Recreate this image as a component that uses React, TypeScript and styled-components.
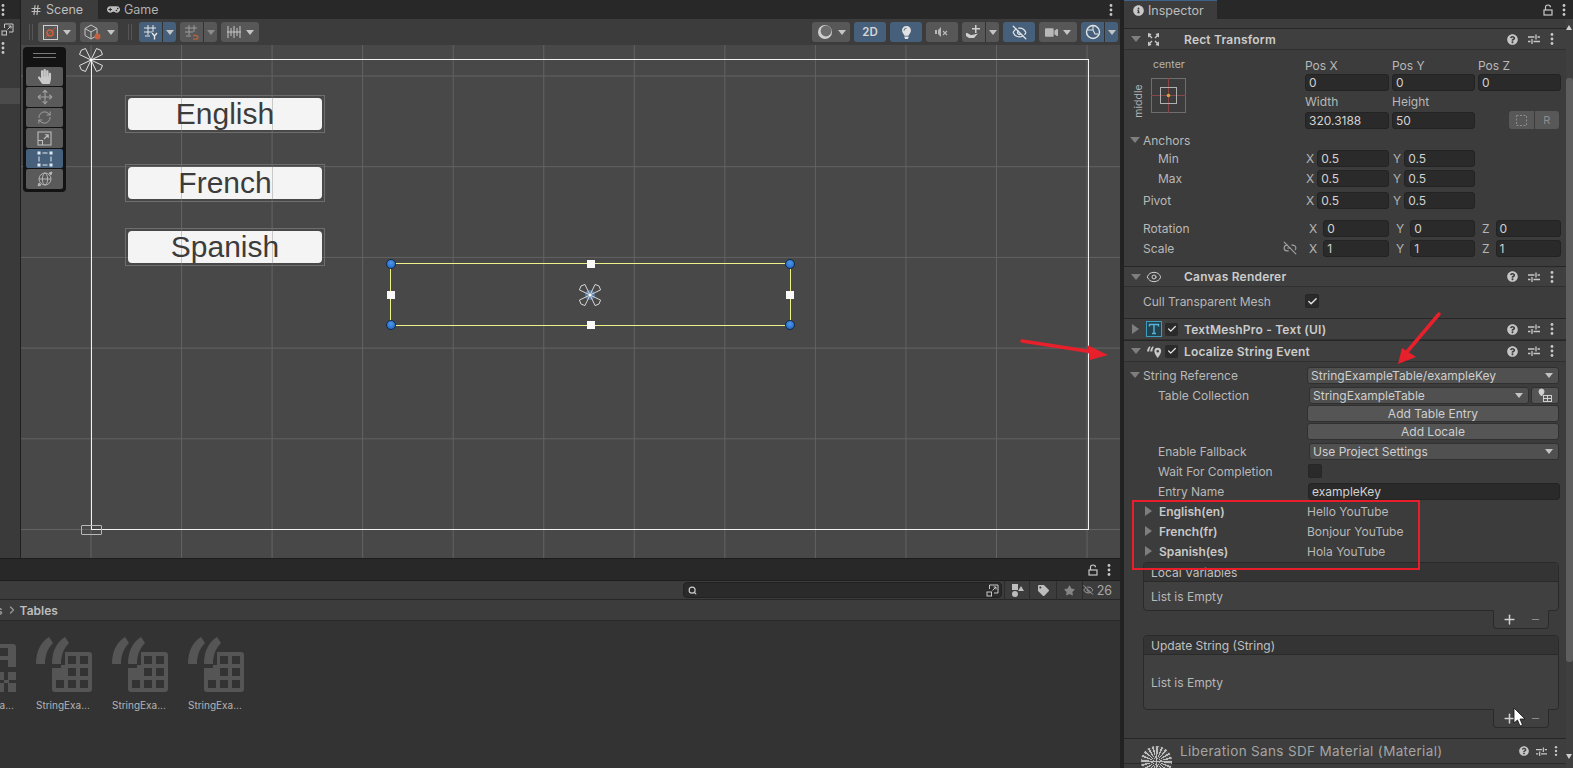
import React from 'react'
import styled, { createGlobalStyle } from 'styled-components'
import { FaHandPaper, FaGamepad, FaLightbulb, FaVideo, FaTag, FaStar, FaInfoCircle, FaQuestionCircle } from 'react-icons/fa'
import { Check, EyeOff, Eye, Hash, Search, Move, RefreshCw, ChevronRight, Plus, Minus, Link2Off } from 'lucide-react'

const GlobalStyle = createGlobalStyle`
  html, body {
    margin: 0;
    height: 100%;
    overflow: hidden;
    background: #282828;
  }
  * {
    box-sizing: border-box;
  }
`

const Page = styled.div`
  position: relative;
  width: 1573px;
  height: 768px;
  overflow: hidden;
  display: flex;
  font-family: Inter, 'Noto Sans', sans-serif;
  font-size: 12px;
  color: #c4c4c4;
  background: #1f1f1f;
`

const LeftColumn = styled.div`
  width: 1120px;
  display: flex;
  flex-direction: column;
`

const TopArea = styled.div`
  height: 558px;
  display: flex;
`

const HierarchyStrip = styled.div`
  width: 20px;
  background: #3a3a3a;
  display: flex;
  flex-direction: column;
`

const StripBar = styled.div<{ $h: number; $dark?: boolean }>`
  height: ${({ $h }) => $h}px;
  flex-shrink: 0;
  display: flex;
  align-items: center;
  padding-left: 1px;
  background: ${({ $dark }) => ($dark ? '#282828' : 'transparent')};
`

const StripSelected = styled.div`
  margin-top: 32px;
  height: 16px;
  background: #4b4b4b;
`

const ScenePanel = styled.div`
  margin-left: 1px;
  flex: 1;
  display: flex;
  flex-direction: column;
  min-width: 0;
`

const TabBar = styled.div`
  height: 19px;
  flex-shrink: 0;
  display: flex;
  align-items: stretch;
  background: #282828;
`

const Tab = styled.div<{ $active?: boolean; $focus?: boolean; $w: number }>`
  width: ${({ $w }) => $w}px;
  display: flex;
  align-items: center;
  gap: 4px;
  padding-left: 9px;
  font-size: 12.5px;
  color: ${({ $active }) => ($active ? '#bdbdbd' : '#b0b0b0')};
  background: ${({ $active }) => ($active ? '#3c3c3c' : 'transparent')};
  border-top: ${({ $focus }) => ($focus ? '1px solid #3f6288' : 'none')};
`

const SceneToolbar = styled.div`
  height: 26px;
  flex-shrink: 0;
  display: flex;
  align-items: center;
  justify-content: space-between;
  padding: 0 2px 0 8px;
  background: #3c3c3c;
`

const ToolGroup = styled.div`
  display: flex;
  align-items: center;
  gap: 4px;
`

const GripLine = styled.div<{ $ml: number; $mr: number }>`
  width: 4px;
  height: 16px;
  margin: 0 ${({ $mr }) => $mr}px 0 ${({ $ml }) => $ml}px;
  border-left: 1px solid #565656;
  border-right: 1px solid #565656;
`

const ToolButton = styled.div<{ $w: number; $blue?: boolean }>`
  width: ${({ $w }) => $w}px;
  height: 20px;
  display: flex;
  align-items: center;
  justify-content: center;
  gap: 5px;
  flex-shrink: 0;
  border-radius: 3px;
  font-size: 11.5px;
  font-weight: 600;
  color: #d6d6d6;
  background: ${({ $blue }) => ($blue ? '#46607c' : '#575757')};
`

const SplitPart = styled.div<{ $w: number; $blue?: boolean; $last?: boolean }>`
  width: ${({ $w }) => $w}px;
  height: 20px;
  display: flex;
  align-items: center;
  justify-content: center;
  background: ${({ $blue }) => ($blue ? '#46607c' : '#575757')};
  border-radius: ${({ $last }) => ($last ? '0 3px 3px 0' : '3px 0 0 3px')};
  border-left: ${({ $last }) => ($last ? '1px solid #333' : 'none')};
`

const SplitButton = styled.div`
  display: flex;
  flex-shrink: 0;
`

const Caret = styled.span<{ $size?: number; $color?: string; $right?: boolean }>`
  display: inline-block;
  flex-shrink: 0;
  ${({ $size = 4, $color = '#c4c4c4', $right }) =>
    $right
      ? `border-top: ${$size}px solid transparent; border-bottom: ${$size}px solid transparent; border-left: ${$size + 2}px solid ${$color};`
      : `border-left: ${$size}px solid transparent; border-right: ${$size}px solid transparent; border-top: ${$size + 1}px solid ${$color};`}
`

const SceneCanvas = styled.div`
  position: relative;
  flex: 1;
  overflow: hidden;
  background: #484848;
`

const GridSvg = styled.svg`
  position: absolute;
  inset: 0;
`

const CanvasFrame = styled.div`
  position: absolute;
  left: 70px;
  top: 14px;
  width: 998px;
  height: 471px;
  border: 1.5px solid #f2f2f2;
`

const SmallRect = styled.div`
  position: absolute;
  left: 60px;
  top: 480px;
  width: 21px;
  height: 10px;
  border: 1px solid #b8b8b8;
  border-radius: 1px;
`

const SceneButtonOutline = styled.div<{ $top: number; $h: number }>`
  position: absolute;
  left: 104px;
  top: ${({ $top }) => $top}px;
  width: 200px;
  height: ${({ $h }) => $h}px;
  padding: 2px;
  border: 1px solid #6e6e6e;
`

const SceneButton = styled.div`
  width: 100%;
  height: 100%;
  display: flex;
  align-items: center;
  justify-content: center;
  border-radius: 4px;
  font-family: 'Liberation Sans', Arial, sans-serif;
  font-size: 30px;
  color: #3c3c3c;
  background:
    linear-gradient(90deg, transparent 53px, #c8c8c8 53px, #c8c8c8 54px, transparent 54px, transparent 144px, #c8c8c8 144px, #c8c8c8 145px, transparent 145px),
    #f4f4f4;
`

const SelectionRect = styled.div`
  position: absolute;
  left: 369px;
  top: 218px;
  width: 401px;
  height: 63px;
  border: 1.5px solid #eef08a;
`

const CornerHandle = styled.span<{ $x: string; $y: string }>`
  position: absolute;
  left: ${({ $x }) => $x};
  top: ${({ $y }) => $y};
  width: 10px;
  height: 10px;
  margin: -5px 0 0 -5px;
  border-radius: 50%;
  border: 1px solid #10294a;
  background: radial-gradient(circle at 50% 35%, #4c97ec, #1d5fb8);
`

const EdgeHandle = styled.span<{ $x: string; $y: string }>`
  position: absolute;
  left: ${({ $x }) => $x};
  top: ${({ $y }) => $y};
  width: 8px;
  height: 8px;
  margin: -4px 0 0 -4px;
  background: #fafafa;
`

const PivotSlot = styled.span<{ $x: number; $y: number }>`
  position: absolute;
  left: ${({ $x }) => $x}px;
  top: ${({ $y }) => $y}px;
  line-height: 0;
`

const ToolPalette = styled.div`
  position: absolute;
  left: 2px;
  top: 2px;
  width: 43px;
  height: 145px;
  padding: 3px;
  display: flex;
  flex-direction: column;
  gap: 1px;
  border-radius: 4px;
  background: #131313;
`

const PaletteGrip = styled.div`
  height: 13px;
  margin: 3px 7px 0;
  border-top: 1px solid #7a7a7a;
  position: relative;
  &::after {
    content: '';
    position: absolute;
    left: 0;
    right: 0;
    top: 3px;
    border-top: 1px solid #7a7a7a;
  }
`

const PaletteButton = styled.div<{ $active?: boolean }>`
  height: 20px;
  display: flex;
  align-items: center;
  justify-content: center;
  border-radius: 2px;
  color: #bdbdbd;
  background: ${({ $active }) => ($active ? '#46607c' : '#5a5a5a')};
`

const BottomPanel = styled.div`
  flex: 1;
  display: flex;
  flex-direction: column;
  border-top: 1px solid #1c1c1c;
`

const ProjectHeader = styled.div`
  height: 21px;
  flex-shrink: 0;
  display: flex;
  align-items: center;
  justify-content: flex-end;
  gap: 9px;
  padding-right: 9px;
  background: #282828;
`

const ProjectToolbar = styled.div`
  height: 20px;
  flex-shrink: 0;
  display: flex;
  align-items: center;
  justify-content: flex-end;
  padding-right: 8px;
  background: #3c3c3c;
  border-top: 1px solid #1e1e1e;
  border-bottom: 1px solid #262626;
`

const SearchBox = styled.div`
  width: 319px;
  height: 16px;
  margin-right: 2px;
  display: flex;
  align-items: center;
  justify-content: space-between;
  padding: 0 2px 0 4px;
  border-radius: 4px;
  background: #2a2a2a;
  border: 1px solid #222;
`

const ProjectTool = styled.div<{ $w: number }>`
  width: ${({ $w }) => $w}px;
  height: 19px;
  display: flex;
  align-items: center;
  justify-content: center;
  gap: 3px;
  border-left: 1px solid #2c2c2c;
  color: #a8a8a8;
  font-size: 12.5px;
`

const Breadcrumb = styled.div`
  height: 21px;
  flex-shrink: 0;
  display: flex;
  align-items: center;
  gap: 2px;
  background: #3c3c3c;
  border-bottom: 1px solid #2a2a2a;
  font-weight: 600;
  color: #bcbcbc;
`

const BreadcrumbParent = styled.span`
  margin: 0 1px 0 -4px;
  color: #9a9a9a;
`

const AssetGrid = styled.div`
  flex: 1;
  display: flex;
  gap: 20px;
  padding-top: 15px;
  overflow: hidden;
  background: #333333;
`

const AssetItem = styled.div<{ $first?: boolean }>`
  width: 56px;
  flex-shrink: 0;
  margin-left: ${({ $first }) => ($first ? -40 : 0)}px;
  display: flex;
  flex-direction: column;
  line-height: 0;
`

const AssetName = styled.div`
  margin-top: 6px;
  font-size: 10px;
  line-height: 14px;
  color: #b4b4b4;
  white-space: nowrap;
`

const InspectorPanel = styled.div`
  position: relative;
  flex: 1;
  display: flex;
  flex-direction: column;
  padding-left: 4px;
  background: #222222;
`

const InspectorBody = styled.div`
  flex: 1;
  padding: 9px 7px 0 0;
  background: #3c3c3c;
  display: flex;
  flex-direction: column;
`

const TabTools = styled.div`
  margin-left: auto;
  display: flex;
  align-items: center;
  gap: 9px;
  padding-right: 7px;
`

const ComponentHeader = styled.div<{ $h?: number; $mt?: number }>`
  height: ${({ $h }) => $h ?? 22}px;
  margin-top: ${({ $mt }) => $mt ?? 0}px;
  flex-shrink: 0;
  display: flex;
  align-items: center;
  padding: 0 12px 0 6px;
  background: #3f3f3f;
  border-top: 1px solid #262626;
  border-bottom: 1px solid #303030;
`

const FoldSlot = styled.span`
  width: 11px;
  display: inline-flex;
  justify-content: center;
  flex-shrink: 0;
`

const HeaderIcon = styled.span`
  width: 17px;
  margin-left: 4px;
  display: inline-flex;
  justify-content: center;
  color: #c8c8c8;
  line-height: 0;
`

const HeaderCheck = styled.span`
  width: 13px;
  height: 13px;
  margin-left: 3px;
  display: inline-flex;
  align-items: center;
  justify-content: center;
  border-radius: 2px;
  background: #2a2a2a;
  color: #e8e8e8;
`

const HeaderTitle = styled.span<{ $ml: number }>`
  margin-left: ${({ $ml }) => $ml}px;
  font-weight: 600;
  letter-spacing: 0.2px;
  color: #cccccc;
`

const HeaderTools = styled.span<{ $gap?: number }>`
  margin-left: auto;
  display: flex;
  align-items: center;
  gap: ${({ $gap }) => $gap ?? 10}px;
  color: #c4c4c4;
`

const Row = styled.div<{ $h?: number; $mt?: number; $indent?: number; $pr?: number }>`
  height: ${({ $h }) => $h ?? 20}px;
  margin-top: ${({ $mt }) => $mt ?? 0}px;
  padding: 0 ${({ $pr }) => $pr ?? 0}px 0 ${({ $indent }) => $indent ?? 0}px;
  flex-shrink: 0;
  display: flex;
  align-items: center;
`

const Label = styled.span<{ $w: number; $bold?: boolean; $pl?: number }>`
  width: ${({ $w }) => $w}px;
  padding-left: ${({ $pl }) => $pl ?? 0}px;
  flex-shrink: 0;
  white-space: nowrap;
  font-weight: ${({ $bold }) => ($bold ? 600 : 400)};
  color: ${({ $bold }) => ($bold ? '#c8c8c8' : '#b8b8b8')};
`

const RectTop = styled.div`
  height: 72px;
  margin-top: 7px;
  flex-shrink: 0;
  display: flex;
`

const AnchorArea = styled.div`
  width: 181px;
  flex-shrink: 0;
  position: relative;
`

const AnchorCaption = styled.span`
  position: absolute;
  left: 29px;
  top: 1px;
  font-size: 10.5px;
  line-height: 14px;
  color: #b4b4b4;
`

const AnchorSide = styled.span`
  position: absolute;
  left: -2px;
  top: 37px;
  font-size: 10.5px;
  line-height: 14px;
  color: #b4b4b4;
  transform: rotate(-90deg);
`

const AnchorBox = styled.span`
  position: absolute;
  left: 27px;
  top: 21px;
  line-height: 0;
`

const PositionGrid = styled.div`
  display: grid;
  grid-template-columns: 84px 83px 83px;
  grid-template-rows: 16px 19px 19px 18px;
  column-gap: 3px;
  align-items: center;
`

const TripleFields = styled.div`
  display: grid;
  grid-template-columns: 84px 83px 83px;
  column-gap: 3px;
`

const Axis = styled.div<{ $wide?: boolean }>`
  display: flex;
  align-items: center;
  padding-left: ${({ $wide }) => ($wide ? 4 : 1)}px;
  gap: ${({ $wide }) => ($wide ? 6 : 3)}px;
  color: #b4b4b4;
`

const FieldInput = styled.div<{ $h?: number }>`
  flex: 1;
  height: ${({ $h }) => $h ?? 17}px;
  display: flex;
  align-items: center;
  padding-left: 3px;
  border-radius: 3px;
  background: #2a2a2a;
  border: 1px solid #232323;
  color: #d2d2d2;
  min-width: 0;
`

const RawConstraint = styled.div`
  height: 18px;
  width: 50px;
  margin-left: 31px;
  display: flex;
  border-radius: 3px;
  overflow: hidden;
`

const RawPart = styled.div`
  flex: 1;
  display: flex;
  align-items: center;
  justify-content: center;
  background: #585858;
  color: #8c8c8c;
  font-size: 11px;
  & + & {
    border-left: 1px solid #3a3a3a;
  }
`

const LinkSlot = styled.span`
  width: 22px;
  flex-shrink: 0;
  color: #9a9a9a;
  line-height: 0;
`

const CheckBox = styled.span`
  width: 14px;
  height: 14px;
  display: inline-flex;
  align-items: center;
  justify-content: center;
  border-radius: 2px;
  background: #2a2a2a;
  border: 1px solid #262626;
  color: #e6e6e6;
`

const Dropdown = styled.div<{ $w: number }>`
  width: ${({ $w }) => $w}px;
  height: 17px;
  flex-shrink: 0;
  display: flex;
  align-items: center;
  justify-content: space-between;
  padding: 0 5px 0 3px;
  border-radius: 3px;
  background: #505050;
  border: 1px solid #303030;
  color: #cfcfcf;
`

const GrayButton = styled.div<{ $w: number; $ml?: number }>`
  width: ${({ $w }) => $w}px;
  height: 17px;
  margin-left: ${({ $ml }) => $ml ?? 0}px;
  display: flex;
  align-items: center;
  justify-content: center;
  flex-shrink: 0;
  border-radius: 3px;
  background: #555555;
  border: 1px solid #303030;
  color: #cfcfcf;
`

const ListBox = styled.div<{ $h: number; $mt: number }>`
  height: ${({ $h }) => $h}px;
  margin: ${({ $mt }) => $mt}px 7px 0 19px;
  flex-shrink: 0;
  display: flex;
  flex-direction: column;
  border: 1px solid #2a2a2a;
  border-radius: 4px;
  background: #404040;
`

const ListTitle = styled.div`
  height: 19px;
  flex-shrink: 0;
  display: flex;
  align-items: center;
  padding-left: 7px;
  background: #343434;
  border-bottom: 1px solid #2a2a2a;
  border-radius: 4px 4px 0 0;
  color: #c0c0c0;
`

const ListBody = styled.div`
  flex: 1;
  display: flex;
  align-items: center;
  padding-left: 7px;
  color: #b8b8b8;
`

const ListFooter = styled.div`
  width: 56px;
  height: 19px;
  margin: -1px 17px 0 auto;
  flex-shrink: 0;
  display: flex;
  align-items: center;
  justify-content: space-around;
  padding: 0 1px;
  background: #404040;
  border: 1px solid #2a2a2a;
  border-top: 1px solid #404040;
  border-radius: 0 0 4px 4px;
  color: #d0d0d0;
  line-height: 0;
`

const MaterialHeader = styled.div`
  height: 26px;
  margin-top: 10px;
  flex-shrink: 0;
  display: flex;
  align-items: center;
  padding: 0 8px 0 17px;
  background: #3e3e3e;
  border-top: 1px solid #262626;
  border-bottom: 1px solid #2a2a2a;
`

const MaterialName = styled.span`
  margin-left: 8px;
  font-size: 13.5px;
  letter-spacing: 0.35px;
  color: #a4a4a4;
`

const MaterialBall = styled.span`
  width: 31px;
  height: 31px;
  margin-top: 20px;
  flex-shrink: 0;
  border-radius: 50%;
  background: repeating-conic-gradient(#bcbcbc 0 8deg, #4d4d4d 8deg 18deg);
`

const ScrollBar = styled.div`
  position: absolute;
  right: 0;
  top: 19px;
  bottom: 0;
  width: 7px;
  background: #3f3f3f;
`

const ScrollThumb = styled.div`
  position: absolute;
  left: 0;
  right: 0;
  top: 59px;
  height: 584px;
  border-radius: 3px;
  background: #5e5e5e;
`

const ScrollArrow = styled.span<{ $top: number; $up?: boolean }>`
  position: absolute;
  left: 0;
  top: ${({ $top }) => $top}px;
  border-left: 3.5px solid transparent;
  border-right: 3.5px solid transparent;
  ${({ $up }) => ($up ? 'border-bottom: 5px solid #cfcfcf;' : 'border-top: 5px solid #cfcfcf;')}
`

const OverlaySvg = styled.svg`
  position: absolute;
  left: 0;
  top: 0;
  pointer-events: none;
`

const Dots = ({ size = 14, color = '#c8c8c8' }: { size?: number; color?: string }) => (
  <svg width="4" height={size} viewBox="0 0 4 14">
    <circle cx="2" cy="2.5" r="1.4" fill={color} />
    <circle cx="2" cy="7" r="1.4" fill={color} />
    <circle cx="2" cy="11.5" r="1.4" fill={color} />
  </svg>
)

const LockIcon = () => (
  <svg width="10" height="12" viewBox="0 0 10 12" fill="none" stroke="#c8c8c8" strokeWidth="1.2">
    <rect x="1" y="6" width="8" height="5" />
    <path d="M2.5 6V3.2C2.5 1.8 3.6 1 5 1s2.5.8 2.5 2.2" />
  </svg>
)

const SlidersIcon = ({ size = 12 }: { size?: number }) => (
  <svg width={size} height={size} viewBox="0 0 12 12" stroke="#c8c8c8" strokeWidth="1.3">
    <path d="M0 4h6.500M9.500 4H12M0 8.500h2.500M5.500 8.500H12M8 1.500v5M4 6v5" />
  </svg>
)

const HeaderButtons = ({ small }: { small?: boolean }) => (
  <HeaderTools $gap={small ? 7 : 10}>
    <FaQuestionCircle size={small ? 10 : 11} color="#c6c6c6" />
    <SlidersIcon size={small ? 11 : 12} />
    <Dots size={small ? 12 : 14} />
  </HeaderTools>
)

const RestoreIcon = ({ color = '#c8c8c8' }: { color?: string }) => (
  <svg width="13" height="13" viewBox="0 0 13 13" fill="none" stroke={color} strokeWidth="1">
    <path d="M3.500 5V1h8.500v8H8" />
    <rect x="1" y="8" width="4.500" height="4" />
    <path d="M6.500 6.500 10 3M7.500 3H10v2.500" />
  </svg>
)

const Gizmo = ({ size = 26, center }: { size?: number; center?: boolean }) => (
  <svg width={size} height={size} viewBox="-13 -13 26 26" fill="none" stroke="#e8e8e8" strokeWidth="0.9">
    {center && <circle r="5.500" fill="#55769c" stroke="none" />}
    {[45, 135, 225, 315].map(a => (
      <path key={a} d="M0 0 L-4.200 -12 L0 -13.800 L4.200 -12 Z" transform={`rotate(${a})`} />
    ))}
    <circle r="1.200" fill="#fff" stroke="none" />
  </svg>
)

const ScaleIcon = () => (
  <svg width="15" height="15" viewBox="0 0 15 15" fill="none" stroke="#bdbdbd" strokeWidth="1.1">
    <path d="M1 9V1h13v13H6" />
    <rect x="1" y="9.500" width="4.500" height="4.500" />
    <path d="M7 8 11 4M8 3.800h3.200V7" />
  </svg>
)

const RectToolIcon = () => (
  <svg width="16" height="16" viewBox="0 0 16 16" fill="#dfe9f3" stroke="#dfe9f3">
    <path d="M2 2h12v12H2z" fill="none" strokeDasharray="5 7" strokeDashoffset="-3.500" strokeWidth="1" />
    <rect x=".5" y=".5" width="3" height="3" stroke="none" />
    <rect x="12.500" y=".5" width="3" height="3" stroke="none" />
    <rect x=".5" y="12.500" width="3" height="3" stroke="none" />
    <rect x="12.500" y="12.500" width="3" height="3" stroke="none" />
  </svg>
)

const TransformIcon = () => (
  <svg width="16" height="16" viewBox="0 0 16 16" fill="none" stroke="#b4b4b4" strokeWidth="1">
    <circle cx="8" cy="8" r="6" />
    <ellipse cx="8" cy="8" rx="2.600" ry="6" />
    <path d="M2 8h12" />
    <path d="M1 15l3-1-2-2zM15 1l-3 1 2 2z" fill="#b4b4b4" />
  </svg>
)

const SnapIcon = ({ color = '#e6e6e6', magnet }: { color?: string; magnet?: boolean }) => (
  <svg width="16" height="16" viewBox="0 0 16 16" fill="none" stroke={color} strokeWidth="1">
    <path d="M5 1v10M10 1v7M1 4h12M1 8h8M2 12h5" />
    {magnet ? (
      <path d="M9 11.500h3a1.800 1.800 0 0 1 0 3.600H9" stroke="#b8603f" strokeWidth="1.400" />
    ) : (
      <path d="M9 9l2.500 3L14 9M11.500 12v3.500" strokeWidth="1.400" />
    )}
  </svg>
)

const ShadingIcon = () => (
  <svg width="16" height="16" viewBox="0 0 16 16">
    <circle cx="8" cy="8" r="7" fill="#cfcfcf" />
    <circle cx="9" cy="7" r="5.400" fill="#6c6c6c" />
  </svg>
)

const CubeIcon = () => (
  <svg width="18" height="17" viewBox="0 0 18 17" fill="none" stroke="#c6c6c6" strokeWidth="1">
    <path d="M1 4.500 7 1l6 3.500v7L7 15l-6-3.500zM1 4.500 7 8l6-3.500M7 8v7" />
    <circle cx="13.500" cy="12.500" r="3" fill="#c7603f" stroke="none" />
  </svg>
)

const RectSnapIcon = () => (
  <svg width="15" height="15" viewBox="0 0 15 15" fill="none">
    <rect x=".5" y=".5" width="14" height="14" stroke="#cfcfcf" />
    <path d="M2 13 13 2" stroke="#b8603f" />
    <circle cx="7" cy="8" r="3" stroke="#c7603f" strokeWidth="1.600" />
  </svg>
)

const LadderIcon = () => (
  <svg width="14" height="14" viewBox="0 0 14 14" stroke="#c8c8c8" strokeWidth="1">
    <path d="M1 1v12M4 3v8M7 1v12M10 3v8M13 1v12M0 7h14" />
  </svg>
)

const GlobeIcon = () => (
  <svg width="18" height="18" viewBox="0 0 18 18" fill="none" stroke="#e4e4e4" strokeWidth="1.400">
    <circle cx="9" cy="9" r="6.500" />
    <path d="M3 7h6l2 4h3M9 3v4" strokeWidth="1.100" />
  </svg>
)

const FxIcon = () => (
  <svg width="15" height="14" viewBox="0 0 15 14" fill="#cfcfcf">
    <path d="M0 8c3 0 3 2 6 2l6-1.500-4 4.500H3L0 11zM9 0h1.500v3H14v1.500h-3.500V8H9V4.500H6V3h3z" />
  </svg>
)

const AudioIcon = () => (
  <svg width="14" height="12" viewBox="0 0 14 12" fill="#b8b8b8">
    <path d="M0 4h2v4H0zM3 4l3-3v10L3 8z" />
    <path d="M8 5l4 4M12 5 8 9" stroke="#b8b8b8" strokeWidth="1.200" />
  </svg>
)

const RectTransformIcon = () => (
  <svg width="13" height="13" viewBox="0 0 13 13" fill="#c8c8c8">
    <path d="M1 0l3.500 1L3.400 2.500 5.500 4.500 4.500 5.500 2.500 3.400 1 4.500zM12 0 8.500 1l1.100 1.500L7.500 4.500l1 1 2-2.100L12 4.500zM1 13l3.500-1-1.100-1.500 2.100-2-1-1-2 2.100L1 8.500zM12 13l-3.500-1 1.100-1.500-2.100-2 1-1 2 2.100L12 8.500z" />
  </svg>
)

const LocalizeIcon = () => (
  <svg width="16" height="15" viewBox="0 0 15 14" fill="#c8c8c8">
    <path d="M1 7c0-2 1-4 2.500-5l.8.8C3.500 4 3 5.500 3 7zM4 7c0-2 1-4 2.500-5l.8.8C6.500 4 6 5.500 6 7z" />
    <path d="M11 3.500a3.200 3.200 0 0 1 3.200 3.200C14.200 9 11 13 11 13S7.800 9 7.800 6.700A3.200 3.200 0 0 1 11 3.500zm0 2a1.200 1.200 0 1 0 0 2.400 1.200 1.200 0 0 0 0-2.400z" />
  </svg>
)

const TmpIcon = () => (
  <svg width="16" height="16" viewBox="0 0 16 16" fill="none">
    <rect x=".5" y=".5" width="15" height="15" fill="#23424f" stroke="#3f9dc0" />
    <path d="M3.500 5.500V3.500h9v2M8 3.500v9M6 12.500h4" stroke="#56b4d6" strokeWidth="1.400" />
  </svg>
)

const TableLinkIcon = () => (
  <svg width="14" height="14" viewBox="0 0 14 14" fill="none" stroke="#cfcfcf" strokeWidth="1">
    <path d="M3.500 1a2.500 2.500 0 0 1 2.500 2.500C6 5.500 3.500 8 3.500 8S1 5.500 1 3.500A2.500 2.500 0 0 1 3.500 1z" fill="#cfcfcf" />
    <rect x="5.500" y="7.500" width="8" height="6" />
    <path d="M5.500 10.500h8M9.500 7.500v6" />
  </svg>
)

const AnchorPreset = () => (
  <svg width="35" height="35" viewBox="0 0 35 35" fill="none">
    <rect x=".5" y=".5" width="34" height="34" stroke="#6e6e6e" />
    <path d="M17.500 0v35M0 17.500h35" stroke="#8a4646" />
    <rect x="9.500" y="9.500" width="16" height="16" stroke="#b0b0b0" />
    <circle cx="17.500" cy="17.500" r="1.800" fill="#d7a13c" />
  </svg>
)

const TableAsset = () => (
  <svg width="56" height="56" viewBox="0 0 56 56" fill="#555555">
    <path d="M0 28C0 15 5 6 13 1l4 6C12 12 9 19 9 28zM16 28C16 15 21 6 29 1l4 6C28 12 25 19 25 28z" />
    <path
      fillRule="evenodd"
      d="M29 16H53a3 3 0 0 1 3 3V53a3 3 0 0 1-3 3H19a3 3 0 0 1-3-3V32H25V29H29zM32 20v8h8v-8zM44 20v8h8v-8zM32 32v8h8v-8zM44 32v8h8v-8zM20 44v8h8v-8zM32 44v8h8v-8zM44 44v8h8v-8z"
    />
  </svg>
)

const FontAsset = () => (
  <svg width="56" height="56" viewBox="0 0 56 56" fill="#555555">
    <path fillRule="evenodd" d="M36 8h17a3 3 0 0 1 3 3v20h-8v-7h-12v-4h12v-8h-12z" />
    <path d="M48 36h8v8h-8zM36 36h8v8h-8zM44 44h5v3h-5zM48 47h8v9h-8zM36 47h8v9h-8z" />
  </svg>
)

const gridXs = Array.from({ length: 12 }, (_, i) => 70 + i * 90.55)
const gridYs = Array.from({ length: 6 }, (_, i) => 31 + i * 90.7)

const vectorRows = [
  { label: 'Min', indent: 34, mt: 0 },
  { label: 'Max', indent: 34, mt: 2 },
  { label: 'Pivot', indent: 19, mt: 4 },
]

const localeRows = [
  { name: 'English(en)', text: 'Hello YouTube' },
  { name: 'French(fr)', text: 'Bonjour YouTube' },
  { name: 'Spanish(es)', text: 'Hola YouTube' },
]

const tools = [
  <FaHandPaper size={15} color="#c9c9c9" />,
  <Move size={16} color="#a2a2a2" strokeWidth={1.6} />,
  <RefreshCw size={15} color="#b0b0b0" strokeWidth={1.3} />,
  <ScaleIcon />,
  <RectToolIcon />,
  <TransformIcon />,
]

const App: React.FC = () => {
  return (
    <Page>
      <GlobalStyle />
      <LeftColumn>
        <TopArea>
          <HierarchyStrip>
            <StripBar $h={19} $dark>
              <Dots />
            </StripBar>
            <StripBar $h={21}>
              <RestoreIcon />
            </StripBar>
            <StripBar $h={16}>
              <Dots />
            </StripBar>
            <StripSelected />
          </HierarchyStrip>
          <ScenePanel>
            <TabBar>
              <Tab $active $w={77}>
                <Hash size={12} color="#bdbdbd" strokeWidth={2.4} />
                Scene
              </Tab>
              <Tab $w={70}>
                <FaGamepad size={13} color="#bdbdbd" />
                Game
              </Tab>
              <TabTools>
                <Dots />
              </TabTools>
            </TabBar>
            <SceneToolbar>
              <ToolGroup>
                <GripLine $ml={0} $mr={1} />
                <ToolButton $w={38}>
                  <RectSnapIcon />
                  <Caret />
                </ToolButton>
                <ToolButton $w={38}>
                  <CubeIcon />
                  <Caret />
                </ToolButton>
                <GripLine $ml={6} $mr={3} />
                <SplitButton>
                  <SplitPart $w={23} $blue>
                    <SnapIcon />
                  </SplitPart>
                  <SplitPart $w={14} $blue $last>
                    <Caret />
                  </SplitPart>
                </SplitButton>
                <SplitButton>
                  <SplitPart $w={23}>
                    <SnapIcon color="#9c9c9c" magnet />
                  </SplitPart>
                  <SplitPart $w={14} $last>
                    <Caret $color="#8c8c8c" />
                  </SplitPart>
                </SplitButton>
                <ToolButton $w={38}>
                  <LadderIcon />
                  <Caret />
                </ToolButton>
              </ToolGroup>
              <ToolGroup>
                <ToolButton $w={38}>
                  <ShadingIcon />
                  <Caret />
                </ToolButton>
                <ToolButton $w={32} $blue>
                  2D
                </ToolButton>
                <ToolButton $w={32} $blue>
                  <FaLightbulb size={13} color="#e2e2e2" />
                </ToolButton>
                <ToolButton $w={32}>
                  <AudioIcon />
                </ToolButton>
                <SplitButton>
                  <SplitPart $w={23}>
                    <FxIcon />
                  </SplitPart>
                  <SplitPart $w={14} $last>
                    <Caret />
                  </SplitPart>
                </SplitButton>
                <ToolButton $w={32} $blue>
                  <EyeOff size={15} color="#e2e2e2" />
                </ToolButton>
                <ToolButton $w={38}>
                  <FaVideo size={13} color="#b8b8b8" />
                  <Caret />
                </ToolButton>
                <SplitButton>
                  <SplitPart $w={23} $blue>
                    <GlobeIcon />
                  </SplitPart>
                  <SplitPart $w={14} $blue $last>
                    <Caret />
                  </SplitPart>
                </SplitButton>
              </ToolGroup>
            </SceneToolbar>
            <SceneCanvas>
              <GridSvg width="1099" height="513">
                {gridXs.map(x => (
                  <line key={x} x1={x} x2={x} y1={0} y2={513} stroke="#636363" />
                ))}
                {gridYs.map(y => (
                  <line key={y} x1={0} x2={1099} y1={y} y2={y} stroke="#636363" />
                ))}
              </GridSvg>
              <CanvasFrame />
              <SmallRect />
              <PivotSlot $x={57} $y={2}>
                <Gizmo />
              </PivotSlot>
              <SceneButtonOutline $top={50} $h={38}>
                <SceneButton>English</SceneButton>
              </SceneButtonOutline>
              <SceneButtonOutline $top={119} $h={38}>
                <SceneButton>French</SceneButton>
              </SceneButtonOutline>
              <SceneButtonOutline $top={183} $h={38}>
                <SceneButton>Spanish</SceneButton>
              </SceneButtonOutline>
              <SelectionRect>
                <CornerHandle $x="0%" $y="0%" />
                <CornerHandle $x="100%" $y="0%" />
                <CornerHandle $x="0%" $y="100%" />
                <CornerHandle $x="100%" $y="100%" />
                <EdgeHandle $x="50%" $y="0%" />
                <EdgeHandle $x="50%" $y="100%" />
                <EdgeHandle $x="0%" $y="50%" />
                <EdgeHandle $x="100%" $y="50%" />
                <PivotSlot $x={187} $y={19}>
                  <Gizmo size={24} center />
                </PivotSlot>
              </SelectionRect>
              <ToolPalette>
                <PaletteGrip />
                {tools.map((icon, i) => (
                  <PaletteButton key={i} $active={i === 4}>
                    {icon}
                  </PaletteButton>
                ))}
              </ToolPalette>
            </SceneCanvas>
          </ScenePanel>
        </TopArea>
        <BottomPanel>
          <ProjectHeader>
            <LockIcon />
            <Dots />
          </ProjectHeader>
          <ProjectToolbar>
            <SearchBox>
              <Search size={9} color="#cfcfcf" strokeWidth={3} />
              <RestoreIcon />
            </SearchBox>
            <ProjectTool $w={25}>
              <svg width="13" height="13" viewBox="0 0 13 13" fill="#bdbdbd">
                <rect x="1" y="0" width="6" height="6" />
                <circle cx="4" cy="10" r="3" />
                <path d="M7 7l3-5 3 5z" />
              </svg>
            </ProjectTool>
            <ProjectTool $w={27}>
              <FaTag size={11} color="#bdbdbd" />
            </ProjectTool>
            <ProjectTool $w={26}>
              <FaStar size={11} color="#858585" />
            </ProjectTool>
            <ProjectTool $w={30}>
              <EyeOff size={14} color="#a8a8a8" />
              26
            </ProjectTool>
          </ProjectToolbar>
          <Breadcrumb>
            <BreadcrumbParent>s</BreadcrumbParent>
            <ChevronRight size={12} color="#9c9c9c" strokeWidth={2.4} />
            Tables
          </Breadcrumb>
          <AssetGrid>
            <AssetItem $first>
              <FontAsset />
              <AssetName>StringExa...</AssetName>
            </AssetItem>
            <AssetItem>
              <TableAsset />
              <AssetName>StringExa...</AssetName>
            </AssetItem>
            <AssetItem>
              <TableAsset />
              <AssetName>StringExa...</AssetName>
            </AssetItem>
            <AssetItem>
              <TableAsset />
              <AssetName>StringExa...</AssetName>
            </AssetItem>
          </AssetGrid>
        </BottomPanel>
      </LeftColumn>

      <InspectorPanel>
        <TabBar>
          <Tab $active $focus $w={93}>
            <FaInfoCircle size={11} color="#c8c8c8" />
            Inspector
          </Tab>
          <TabTools>
            <LockIcon />
            <Dots />
          </TabTools>
        </TabBar>
        <InspectorBody>
          <ComponentHeader>
            <FoldSlot>
              <Caret $size={5} $color="#7e7e7e" />
            </FoldSlot>
            <HeaderIcon>
              <RectTransformIcon />
            </HeaderIcon>
            <HeaderTitle $ml={22}>Rect Transform</HeaderTitle>
            <HeaderButtons />
          </ComponentHeader>
          <RectTop>
            <AnchorArea>
              <AnchorCaption>center</AnchorCaption>
              <AnchorSide>middle</AnchorSide>
              <AnchorBox>
                <AnchorPreset />
              </AnchorBox>
            </AnchorArea>
            <PositionGrid>
              <Label $w={84}>Pos X</Label>
              <Label $w={83}>Pos Y</Label>
              <Label $w={83}>Pos Z</Label>
              <FieldInput>0</FieldInput>
              <FieldInput>0</FieldInput>
              <FieldInput>0</FieldInput>
              <Label $w={84}>Width</Label>
              <Label $w={83}>Height</Label>
              <span />
              <FieldInput>320.3188</FieldInput>
              <FieldInput>50</FieldInput>
              <RawConstraint>
                <RawPart>
                  <svg width="11" height="11" viewBox="0 0 11 11" fill="none" stroke="#8c8c8c" strokeDasharray="2 1.500">
                    <rect x=".5" y=".5" width="10" height="10" />
                  </svg>
                </RawPart>
                <RawPart>R</RawPart>
              </RawConstraint>
            </PositionGrid>
          </RectTop>
          <Row $h={18} $mt={2} $indent={5}>
            <FoldSlot>
              <Caret $size={5} $color="#7e7e7e" />
            </FoldSlot>
            <Label $w={160} $pl={3}>
              Anchors
            </Label>
          </Row>
          {vectorRows.map(({ label, indent, mt }) => (
            <Row key={label} $h={18} $mt={mt} $indent={indent}>
              <Label $w={181 - indent}>{label}</Label>
              <TripleFields>
                <Axis>
                  X<FieldInput>0.5</FieldInput>
                </Axis>
                <Axis>
                  Y<FieldInput>0.5</FieldInput>
                </Axis>
              </TripleFields>
            </Row>
          ))}
          <Row $h={18} $mt={10} $indent={19}>
            <Label $w={162}>Rotation</Label>
            <TripleFields>
              <Axis $wide>
                X<FieldInput>0</FieldInput>
              </Axis>
              <Axis $wide>
                Y<FieldInput>0</FieldInput>
              </Axis>
              <Axis $wide>
                Z<FieldInput>0</FieldInput>
              </Axis>
            </TripleFields>
          </Row>
          <Row $h={18} $mt={2} $indent={19}>
            <Label $w={140}>Scale</Label>
            <LinkSlot>
              <Link2Off size={14} color="#a0a0a0" />
            </LinkSlot>
            <TripleFields>
              <Axis $wide>
                X<FieldInput>1</FieldInput>
              </Axis>
              <Axis $wide>
                Y<FieldInput>1</FieldInput>
              </Axis>
              <Axis $wide>
                Z<FieldInput>1</FieldInput>
              </Axis>
            </TripleFields>
          </Row>

          <ComponentHeader $mt={9} $h={21}>
            <FoldSlot>
              <Caret $size={5} $color="#7e7e7e" />
            </FoldSlot>
            <HeaderIcon>
              <Eye size={16} color="#cfcfcf" strokeWidth={1.5} />
            </HeaderIcon>
            <HeaderTitle $ml={22}>Canvas Renderer</HeaderTitle>
            <HeaderButtons />
          </ComponentHeader>
          <Row $h={20} $mt={4} $indent={19}>
            <Label $w={162}>Cull Transparent Mesh</Label>
            <CheckBox>
              <Check size={11} strokeWidth={3} />
            </CheckBox>
          </Row>

          <ComponentHeader $mt={7} $h={22}>
            <FoldSlot>
              <Caret $right $size={5} $color="#7e7e7e" />
            </FoldSlot>
            <HeaderIcon>
              <TmpIcon />
            </HeaderIcon>
            <HeaderCheck>
              <Check size={10} strokeWidth={3} />
            </HeaderCheck>
            <HeaderTitle $ml={6}>TextMeshPro - Text (UI)</HeaderTitle>
            <HeaderButtons />
          </ComponentHeader>
          <ComponentHeader $h={22}>
            <FoldSlot>
              <Caret $size={5} $color="#7e7e7e" />
            </FoldSlot>
            <HeaderIcon>
              <LocalizeIcon />
            </HeaderIcon>
            <HeaderCheck>
              <Check size={10} strokeWidth={3} />
            </HeaderCheck>
            <HeaderTitle $ml={6}>Localize String Event</HeaderTitle>
            <HeaderButtons />
          </ComponentHeader>

          <Row $h={20} $mt={3} $indent={5}>
            <FoldSlot>
              <Caret $size={5} $color="#7e7e7e" />
            </FoldSlot>
            <Label $w={167} $pl={3}>
              String Reference
            </Label>
            <Dropdown $w={252}>
              StringExampleTable/exampleKey
              <Caret />
            </Dropdown>
          </Row>
          <Row $h={20} $indent={34}>
            <Label $w={151}>Table Collection</Label>
            <Dropdown $w={220}>
              StringExampleTable
              <Caret />
            </Dropdown>
            <GrayButton $w={28} $ml={2}>
              <TableLinkIcon />
            </GrayButton>
          </Row>
          <Row $h={17} $indent={183}>
            <GrayButton $w={252}>Add Table Entry</GrayButton>
          </Row>
          <Row $h={17} $mt={1} $indent={183}>
            <GrayButton $w={252}>Add Locale</GrayButton>
          </Row>
          <Row $h={20} $mt={1} $indent={34}>
            <Label $w={151}>Enable Fallback</Label>
            <Dropdown $w={250}>
              Use Project Settings
              <Caret />
            </Dropdown>
          </Row>
          <Row $h={20} $indent={34}>
            <Label $w={150}>Wait For Completion</Label>
            <CheckBox />
          </Row>
          <Row $h={20} $indent={34} $pr={6}>
            <Label $w={150}>Entry Name</Label>
            <FieldInput>exampleKey</FieldInput>
          </Row>
          {localeRows.map(({ name, text }) => (
            <Row key={name} $h={20} $indent={19}>
              <FoldSlot>
                <Caret $right $size={5} $color="#7e7e7e" />
              </FoldSlot>
              <Label $w={153} $bold $pl={5}>
                {name}
              </Label>
              <Label $w={120}>{text}</Label>
            </Row>
          ))}
          <ListBox $h={49} $mt={1}>
            <ListTitle>Local Variables</ListTitle>
            <ListBody>List is Empty</ListBody>
          </ListBox>
          <ListFooter>
            <Plus size={15} strokeWidth={2.4} />
            <Minus size={11} color="#8c8c8c" strokeWidth={2.4} />
          </ListFooter>
          <ListBox $h={75} $mt={6}>
            <ListTitle>Update String (String)</ListTitle>
            <ListBody>List is Empty</ListBody>
          </ListBox>
          <ListFooter>
            <Plus size={15} strokeWidth={2.4} />
            <Minus size={11} color="#8c8c8c" strokeWidth={2.4} />
          </ListFooter>
          <MaterialHeader>
            <MaterialBall />
            <MaterialName>Liberation Sans SDF Material (Material)</MaterialName>
            <HeaderButtons small />
          </MaterialHeader>
        </InspectorBody>
        <ScrollBar>
          <ScrollArrow $up $top={6} />
          <ScrollThumb />
          <ScrollArrow $top={735} />
        </ScrollBar>
      </InspectorPanel>

      <OverlaySvg width="1573" height="768" viewBox="0 0 1573 768">
        <path d="M1022 341 1093 352" stroke="#e8202c" strokeWidth="3.500" strokeLinecap="round" />
        <path d="M1108 355 1087 345 1090 360z" fill="#e8202c" />
        <path d="M1439 314 1406 353" stroke="#e8202c" strokeWidth="3.500" strokeLinecap="round" />
        <path d="M1398 364 1402 348 1416 357z" fill="#e8202c" />
        <rect x="1133" y="501" width="286" height="68" fill="none" stroke="#e81e2a" strokeWidth="2" />
        <path d="M1514 708v15l3.500-3 2.500 6 2.500-1-2.500-6h5z" fill="#fff" stroke="#111" strokeWidth="0.8" />
      </OverlaySvg>
    </Page>
  )
}

export default App
